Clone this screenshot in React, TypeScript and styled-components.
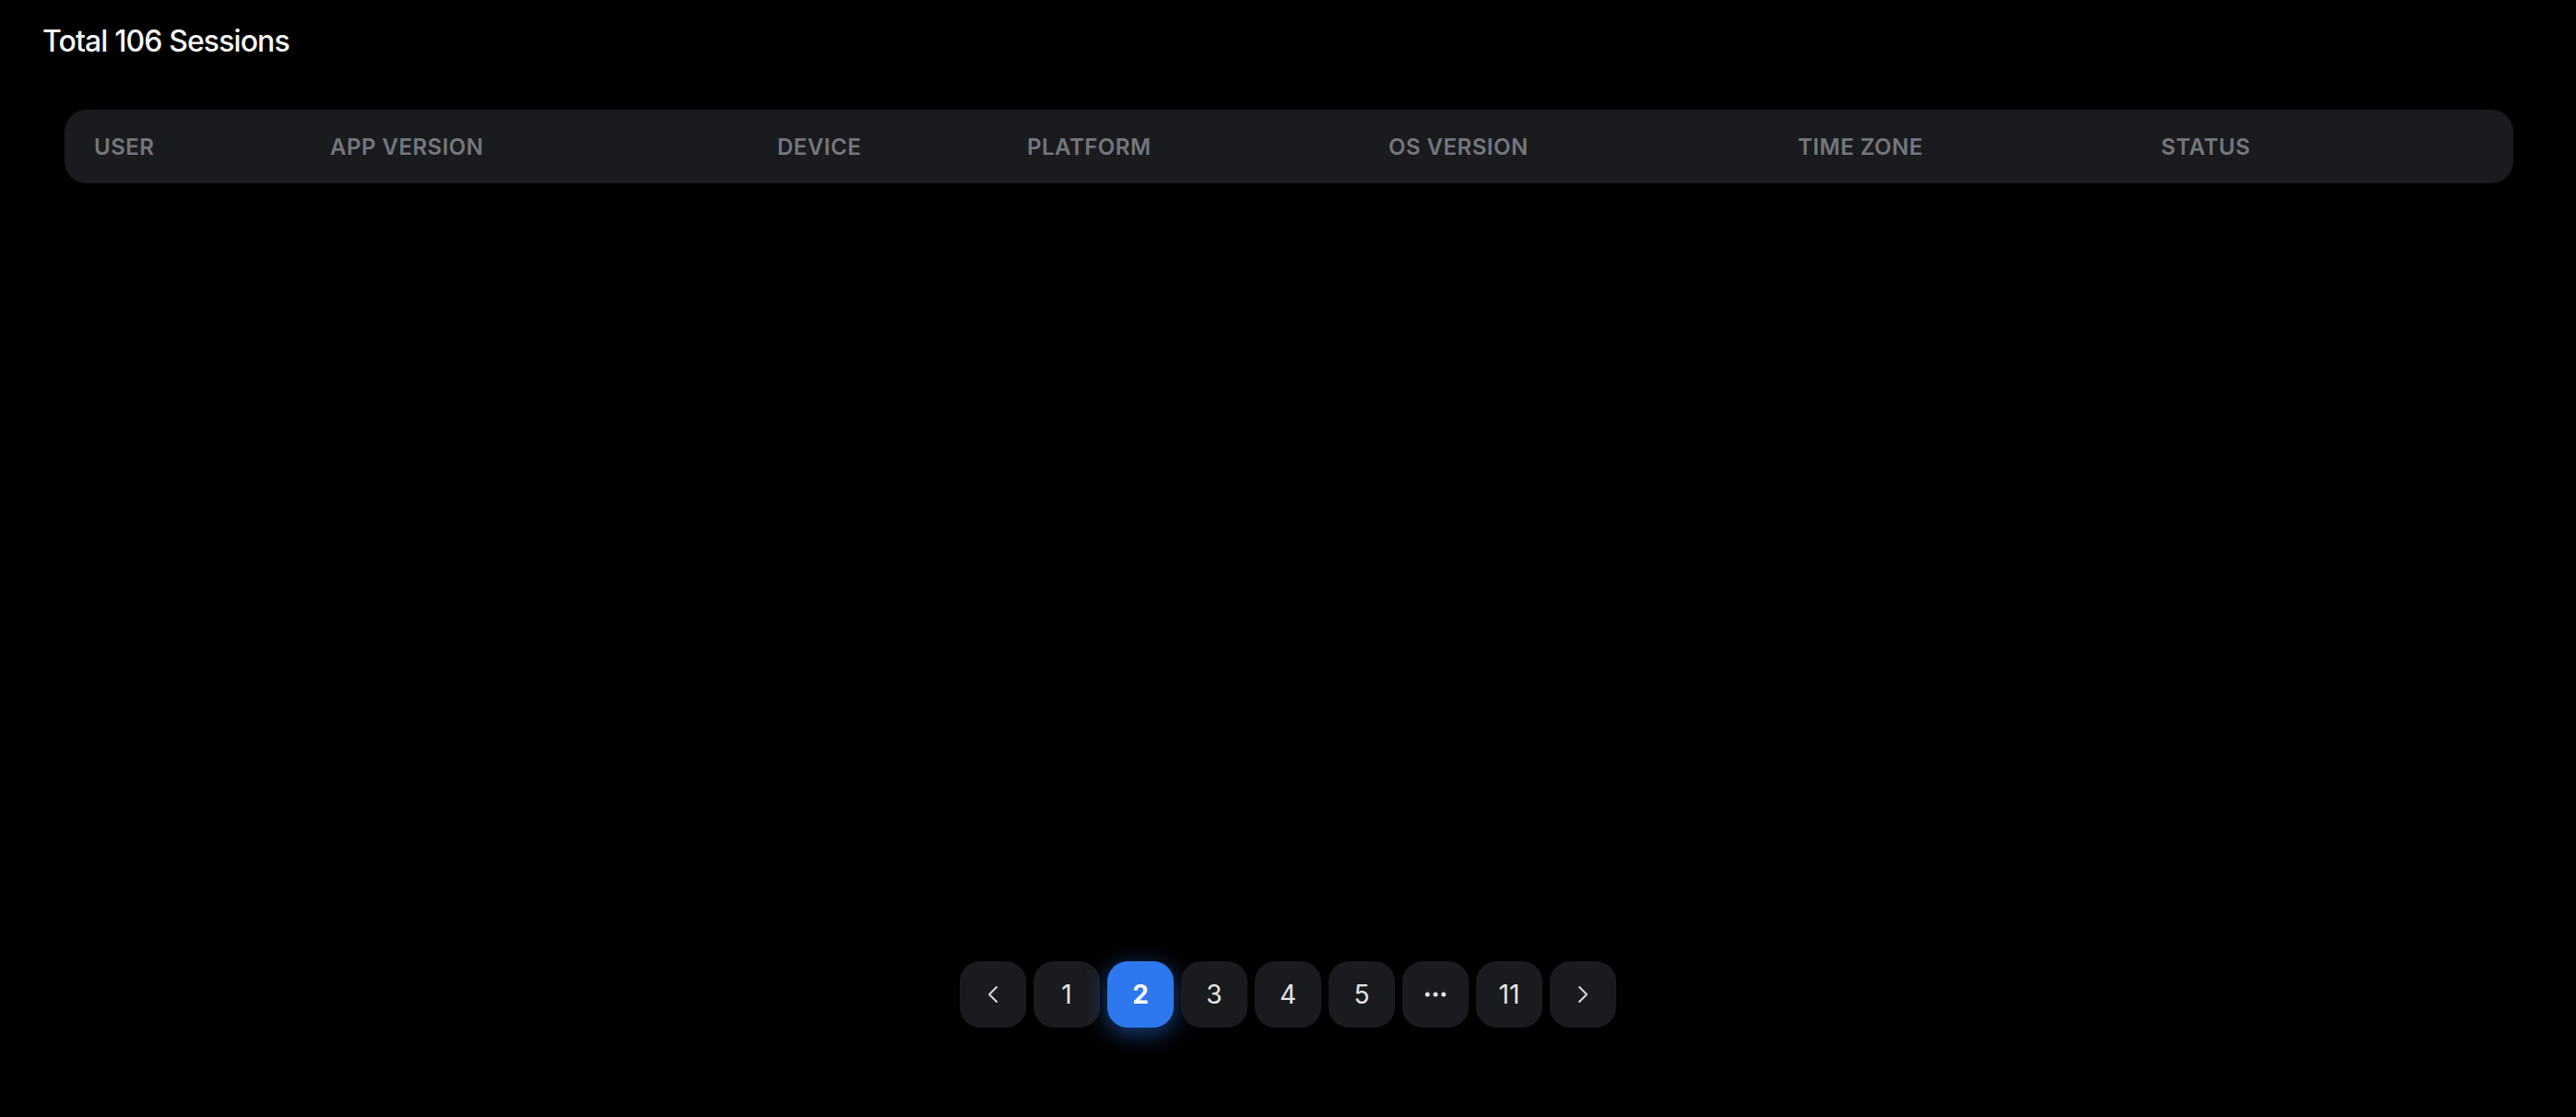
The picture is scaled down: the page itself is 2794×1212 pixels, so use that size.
import React from "react";
import styled, { createGlobalStyle } from "styled-components";
import { ChevronLeft, ChevronRight, Ellipsis } from "lucide-react";

const GlobalStyle = createGlobalStyle`
  html, body {
    margin: 0;
    padding: 0;
    background: #000000;
    height: 100%;
  }
  body {
    font-family: Inter, "Noto Sans", "Liberation Sans", sans-serif;
    color: #f5f5f7;
    -webkit-font-smoothing: antialiased;
  }
  #root {
    height: 100%;
  }
  * { box-sizing: border-box; }
`;

const Page = styled.div`
  display: flex;
  flex-direction: column;
  height: 100vh;
  padding: 21px 46px 97px;
`;

const Title = styled.h1`
  margin: 0;
  font-size: 32px;
  line-height: 48px;
  font-weight: 500;
  letter-spacing: -0.9px;
  color: #f7f7f8;
`;

const Table = styled.div`
  margin: 50px 22px 0 24px;
  display: flex;
  flex-direction: column;
`;

const HeaderRow = styled.div`
  display: grid;
  grid-template-columns: 256px 485px 271px 392px 444px 394px 1fr;
  align-items: center;
  height: 80px;
  background: #1a1b1e;
  border-radius: 24px;
`;

const HeaderCell = styled.div`
  padding: 2px 32px 0;
  font-size: 24px;
  line-height: 32px;
  font-weight: 600;
  letter-spacing: 0.5px;
  text-transform: uppercase;
  color: #74777d;
  white-space: nowrap;
`;

const Spacer = styled.div`
  flex: 1;
`;

const Pagination = styled.nav`
  display: flex;
  justify-content: center;
  gap: 8px;
`;

const PageButton = styled.button<{ $active?: boolean }>`
  width: 72px;
  height: 72px;
  border: none;
  border-radius: 22px;
  padding: 0;
  display: flex;
  align-items: center;
  justify-content: center;
  font-family: Inter, "Noto Sans", "Liberation Sans", sans-serif;
  font-size: 28px;
  line-height: 1;
  font-weight: ${(p) => (p.$active ? 700 : 400)};
  color: ${(p) => (p.$active ? "#ffffff" : "#e4e4e6")};
  background: ${(p) => (p.$active ? "#2d78ee" : "#1a1b1e")};
  box-shadow: ${(p) =>
    p.$active ? "0 6px 26px rgba(45, 120, 238, 0.55)" : "none"};
  cursor: pointer;
`;

const columns = [
  "User",
  "App Version",
  "Device",
  "Platform",
  "OS Version",
  "Time Zone",
  "Status",
];

const pages: (number | "ellipsis")[] = [1, 2, 3, 4, 5, "ellipsis", 11];

export default function App() {
  const current = 2;
  return (
    <>
      <GlobalStyle />
      <Page>
        <Title>Total 106 Sessions</Title>
        <Table>
          <HeaderRow>
            {columns.map((c) => (
              <HeaderCell key={c}>{c}</HeaderCell>
            ))}
          </HeaderRow>
        </Table>
        <Spacer />
        <Pagination>
          <PageButton aria-label="Previous page">
            <ChevronLeft size={32} strokeWidth={1.5} color="#d8d8da" />
          </PageButton>
          {pages.map((p, i) =>
            p === "ellipsis" ? (
              <PageButton key={`e${i}`} aria-label="More pages">
                <Ellipsis size={30} strokeWidth={2} color="#e4e4e6" />
              </PageButton>
            ) : (
              <PageButton key={p} $active={p === current}>
                {p}
              </PageButton>
            )
          )}
          <PageButton aria-label="Next page">
            <ChevronRight size={32} strokeWidth={1.5} color="#d8d8da" />
          </PageButton>
        </Pagination>
      </Page>
    </>
  );
}
